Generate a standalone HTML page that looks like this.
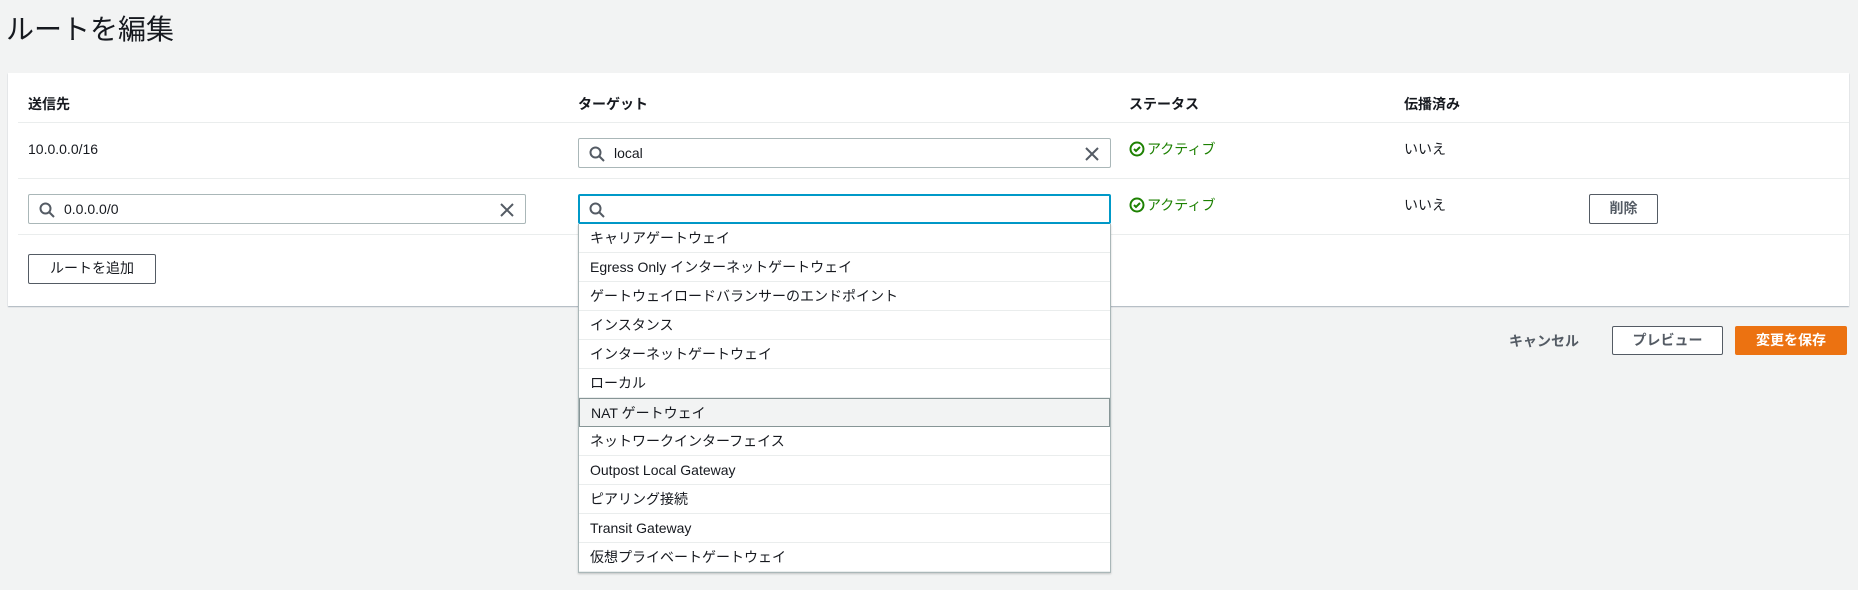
<!DOCTYPE html>
<html><head><meta charset="utf-8"><style>
*{box-sizing:border-box;margin:0;padding:0}
body{width:1858px;height:590px;background:#f2f3f3;font-family:"Liberation Sans","Noto Sans CJK JP",sans-serif;font-size:14px;color:#16191f;position:relative;overflow:hidden}
.a{position:absolute}
h1{position:absolute;left:6px;top:8px;font-size:28px;font-weight:400}
.panel{position:absolute;left:8px;top:73px;width:1841px;height:233px;background:#fff;box-shadow:0 1px 1px rgba(0,31,63,.3)}
.line{position:absolute;left:10px;right:0;height:1px;background:#eaeded}
.th{font-weight:700;top:94px}
.inp{position:absolute;height:30px;border:1px solid #aab7b8;border-radius:2px;background:#fff}
.inp svg{position:absolute;left:10px;top:7px}
.inp .t{position:absolute;left:35px;top:6px}
.x{position:absolute;right:10px;top:7px}
.btn{position:absolute;border:1px solid #545b64;border-radius:2px;background:#fff;font-weight:700;color:#545b64;text-align:center;line-height:27px}
.dd{position:absolute;left:578px;top:224px;width:533px;background:#fff;border:1px solid #aab7b8;border-top:none;box-shadow:0 1px 2px rgba(0,0,0,.2)}
.dd div{height:29px;line-height:28px;padding-left:11px;border-bottom:1px solid #eaeded}
.dd .h{background:#f2f3f3;border:1px solid #879596}
.ok{color:#1d8102}
.ok svg{vertical-align:-3px;margin-right:2px}
</style></head><body>
<h1>ルートを編集</h1>
<div class="panel"></div>
<div class="a th" style="left:28px">送信先</div>
<div class="a th" style="left:578px">ターゲット</div>
<div class="a th" style="left:1129px">ステータス</div>
<div class="a th" style="left:1404px">伝播済み</div>
<div class="a" style="left:18px;right:9px;top:122px;height:1px;background:#eaeded"></div>
<div class="a" style="left:18px;right:9px;top:178px;height:1px;background:#eaeded"></div>
<div class="a" style="left:18px;right:9px;top:234px;height:1px;background:#eaeded"></div>
<div class="a" style="left:28px;top:141px">10.0.0.0/16</div>
<div class="inp" style="left:578px;top:138px;width:533px"><svg width="16" height="16" viewBox="0 0 16 16" fill="none" stroke="#545b64" stroke-width="2"><circle cx="6.5" cy="6.5" r="5"/><path d="M10 10l5 5"/></svg><span class="t">local</span><svg class="x" style="left:auto" width="16" height="16" viewBox="0 0 16 16" stroke="#545b64" stroke-width="2"><path d="M2 2l12 12M14 2L2 14"/></svg></div>
<div class="a ok" style="left:1129px;top:139px"><svg width="16" height="16" viewBox="0 0 16 16" fill="none" stroke="#1d8102" stroke-width="2"><circle cx="8" cy="8" r="6.5"/><path d="M5 8l2 2 4-4"/></svg>アクティブ</div>
<div class="a" style="left:1404px;top:139px">いいえ</div>
<div class="inp" style="left:28px;top:194px;width:498px"><svg width="16" height="16" viewBox="0 0 16 16" fill="none" stroke="#545b64" stroke-width="2"><circle cx="6.5" cy="6.5" r="5"/><path d="M10 10l5 5"/></svg><span class="t">0.0.0.0/0</span><svg class="x" style="left:auto" width="16" height="16" viewBox="0 0 16 16" stroke="#545b64" stroke-width="2"><path d="M2 2l12 12M14 2L2 14"/></svg></div>
<div class="inp" style="left:578px;top:194px;width:533px;border:2px solid #0099c8"><svg width="16" height="16" viewBox="0 0 16 16" fill="none" stroke="#545b64" stroke-width="2" style="left:9px;top:6px"><circle cx="6.5" cy="6.5" r="5"/><path d="M10 10l5 5"/></svg></div>
<div class="a ok" style="left:1129px;top:195px"><svg width="16" height="16" viewBox="0 0 16 16" fill="none" stroke="#1d8102" stroke-width="2"><circle cx="8" cy="8" r="6.5"/><path d="M5 8l2 2 4-4"/></svg>アクティブ</div>
<div class="a" style="left:1404px;top:195px">いいえ</div>
<div class="btn" style="left:1589px;top:194px;width:69px;height:30px">削除</div>
<div class="btn" style="left:28px;top:254px;width:128px;height:30px;font-weight:400;color:#16191f">ルートを追加</div>
<div class="dd">
<div>キャリアゲートウェイ</div>
<div>Egress Only インターネットゲートウェイ</div>
<div>ゲートウェイロードバランサーのエンドポイント</div>
<div>インスタンス</div>
<div>インターネットゲートウェイ</div>
<div>ローカル</div>
<div class="h">NAT ゲートウェイ</div>
<div>ネットワークインターフェイス</div>
<div>Outpost Local Gateway</div>
<div>ピアリング接続</div>
<div>Transit Gateway</div>
<div>仮想プライベートゲートウェイ</div>
</div>
<div class="a" style="left:1509px;top:331px;font-weight:700;color:#545b64">キャンセル</div>
<div class="btn" style="left:1612px;top:326px;width:111px;height:29px">プレビュー</div>
<div class="btn" style="left:1735px;top:326px;width:112px;height:29px;background:#ec7211;border-color:#ec7211;color:#fff">変更を保存</div>
</body></html>
